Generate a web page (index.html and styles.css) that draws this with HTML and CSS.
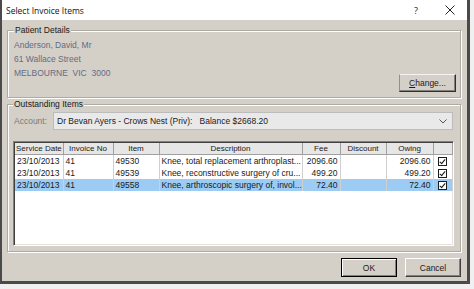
FILE: index.html
```html
<!DOCTYPE html>
<html lang="en">
<head>
    <meta charset="UTF-8">
    <meta name="viewport" content="width=device-width, initial-scale=1.0">
    <title>Select Invoice Items</title>
    <link rel="stylesheet" href="styles.css">
</head>
<body>

<div class="window">
    <div class="titlebar">
        <span class="title">Select Invoice Items</span>
        <span class="title-btn">?</span>
        <span class="title-btn">
            <svg width="10" height="10" viewBox="0 0 10 10"><path d="M0.5 0.5 L9.5 9.5 M9.5 0.5 L0.5 9.5" stroke="#222" stroke-width="1" fill="none"/></svg>
        </span>
    </div>

    <div class="client">
        <fieldset class="group patient">
            <legend>Patient Details</legend>
            <div class="patient-body">
                <div class="address">
                    <div>Anderson, David, Mr</div>
                    <div>61 Wallace Street</div>
                    <div>MELBOURNE&nbsp; VIC&nbsp; 3000</div>
                </div>
                <button type="button" class="btn change"><u>C</u>hange...</button>
            </div>
        </fieldset>

        <fieldset class="group items">
            <legend>Outstanding Items</legend>
            <div class="account-row">
                <label for="account">Account:</label>
                <div class="combo" id="account">
                    <span>Dr Bevan Ayers - Crows Nest (Priv):&nbsp;&nbsp; Balance $2668.20</span>
                    <svg width="8" height="5" viewBox="0 0 8 5"><path d="M0.5 0.5 L4 4 L7.5 0.5" stroke="#555" stroke-width="1" fill="none"/></svg>
                </div>
            </div>
            <div class="list">
                <table>
                    <colgroup>
                        <col style="width: 48px">
                        <col style="width: 50px">
                        <col style="width: 46px">
                        <col style="width: 143px">
                        <col style="width: 38px">
                        <col style="width: 46px">
                        <col style="width: 47px">
                        <col style="width: 19px">
                    </colgroup>
                    <thead>
                        <tr>
                            <th class="left">Service Date</th>
                            <th>Invoice No</th>
                            <th>Item</th>
                            <th>Description</th>
                            <th>Fee</th>
                            <th>Discount</th>
                            <th>Owing</th>
                            <th></th>
                        </tr>
                    </thead>
                    <tbody>
                        <tr>
                            <td>23/10/2013</td>
                            <td>41</td>
                            <td>49530</td>
                            <td>Knee, total replacement arthroplast...</td>
                            <td class="num">2096.60</td>
                            <td></td>
                            <td class="num">2096.60</td>
                            <td class="check"><span class="checkbox"></span></td>
                        </tr>
                        <tr>
                            <td>23/10/2013</td>
                            <td>41</td>
                            <td>49539</td>
                            <td>Knee, reconstructive surgery of cru...</td>
                            <td class="num">499.20</td>
                            <td></td>
                            <td class="num">499.20</td>
                            <td class="check"><span class="checkbox"></span></td>
                        </tr>
                        <tr class="selected">
                            <td>23/10/2013</td>
                            <td>41</td>
                            <td>49558</td>
                            <td>Knee, arthroscopic surgery of, invol...</td>
                            <td class="num">72.40</td>
                            <td></td>
                            <td class="num">72.40</td>
                            <td class="check"><span class="checkbox"></span></td>
                        </tr>
                    </tbody>
                </table>
            </div>
        </fieldset>

        <div class="actions">
            <button type="button" class="btn default">OK</button>
            <button type="button" class="btn">Cancel</button>
        </div>
    </div>
</div>

</body>
</html>
```

FILE: styles.css
```css
body {
    margin: 0;
    background-color: #f0f0f0;
    font-family: "Liberation Sans", Arial, sans-serif;
    font-size: 8.5px;
    color: #1a1a1a;
}
.window {
    width: 465px;
    height: 281px;
    border: 3px solid #4a4a4a;
    border-left-width: 2px;
    border-top: none;
    background-color: #d4d0c8;
    display: flex;
    flex-direction: column;
}
.titlebar {
    height: 20px;
    background: #ffffff;
    display: flex;
    align-items: center;
}
.title {
    flex: 1;
    padding-left: 4px;
    font-family: "Open Sans", sans-serif;
    font-size: 8.5px;
    color: #111;
}
.title-btn {
    width: 34px;
    height: 20px;
    display: flex;
    align-items: center;
    justify-content: center;
    font-family: "Open Sans", sans-serif;
    font-size: 9px;
    color: #222;
}
.client {
    flex: 1;
    padding: 5px 6px 0 5px;
}
.group {
    margin: 0;
    min-width: 0;
    border: 1px solid #aeaba4;
    box-shadow: inset 1px 1px 0 #fff, 1px 1px 0 #fff;
}
.group legend {
    padding: 0 1px;
    line-height: 11px;
    background-color: #d4d0c8;
    color: #1a1a1a;
}
.patient {
    padding: 2px 4px 4px 6px;
}
.patient-body {
    display: flex;
    justify-content: space-between;
    min-height: 55px;
}
.address {
    line-height: 14px;
    color: #646b84;
}
.btn {
    font-family: "Liberation Sans", Arial, sans-serif;
    font-size: 8.5px;
    color: #1a1a1a;
    background-color: #d4d0c8;
    border: 1px solid;
    border-color: #fff #404040 #404040 #fff;
    box-shadow: inset -1px -1px 0 #808080;
    padding: 0;
    width: 56px;
    height: 19px;
}
.btn.default {
    border-color: #000;
    box-shadow: inset 1px 1px 0 #fff, inset -1px -1px 0 #808080;
}
.change {
    align-self: flex-end;
    width: 57px;
    height: 18px;
    margin-bottom: 1px;
    border-color: #f4f4f4 #303030 #303030 #909090;
}
.items {
    margin-top: 1px;
    padding: 2px 6px 5px 5px;
}
.account-row {
    display: flex;
    align-items: center;
}
.account-row label {
    width: 40px;
    padding-left: 1px;
    box-sizing: border-box;
    color: #7a7a7a;
}
.combo {
    flex: 1;
    margin-right: 1px;
    height: 18px;
    box-sizing: border-box;
    border: 1px solid #bcbcbc;
    background-color: #e9e9e9;
    display: flex;
    align-items: center;
    justify-content: space-between;
    padding: 0 5px 0 3px;
}
.list {
    margin-top: 11px;
    height: 105px;
    box-sizing: border-box;
    border: 1px solid;
    border-color: #808080 #fff #fff #808080;
    box-shadow: inset 1px 1px 0 #404040, inset -1px -1px 0 #e4e2dc;
    padding: 1px;
    background: #ffffff;
    overflow: hidden;
}
.list table {
    width: 437px;
    table-layout: fixed;
    border-collapse: collapse;
}
.list th {
    height: 11px;
    padding: 0 1px;
    font-size: 8px;
    font-weight: normal;
    background-color: #e6e6e6;
    border-right: 1px solid #a0a0a0;
    border-bottom: 1px solid #a0a0a0;
    text-align: center;
    white-space: nowrap;
    overflow: hidden;
}
.list th.left {
    text-align: left;
}
.list td {
    height: 12px;
    padding: 0 2px;
    border-right: 1px solid #d0d0d0;
    white-space: nowrap;
    overflow: hidden;
}
.list td.num {
    text-align: right;
}
.list tr.selected td {
    background-color: #9ccbf3;
}
.list td.check {
    text-align: center;
    padding: 0;
}
.checkbox {
    display: inline-block;
    width: 9px;
    height: 9px;
    box-sizing: border-box;
    border: 1px solid #1c1c1c;
    background: #fff;
    vertical-align: middle;
    position: relative;
}
.checkbox::after {
    content: "";
    position: absolute;
    left: 2px;
    top: 0;
    width: 2px;
    height: 5px;
    border: solid #111;
    border-width: 0 1.5px 1.5px 0;
    transform: rotate(40deg);
}
.actions {
    display: flex;
    justify-content: flex-end;
    gap: 8px;
    margin-top: 6px;
}
```
